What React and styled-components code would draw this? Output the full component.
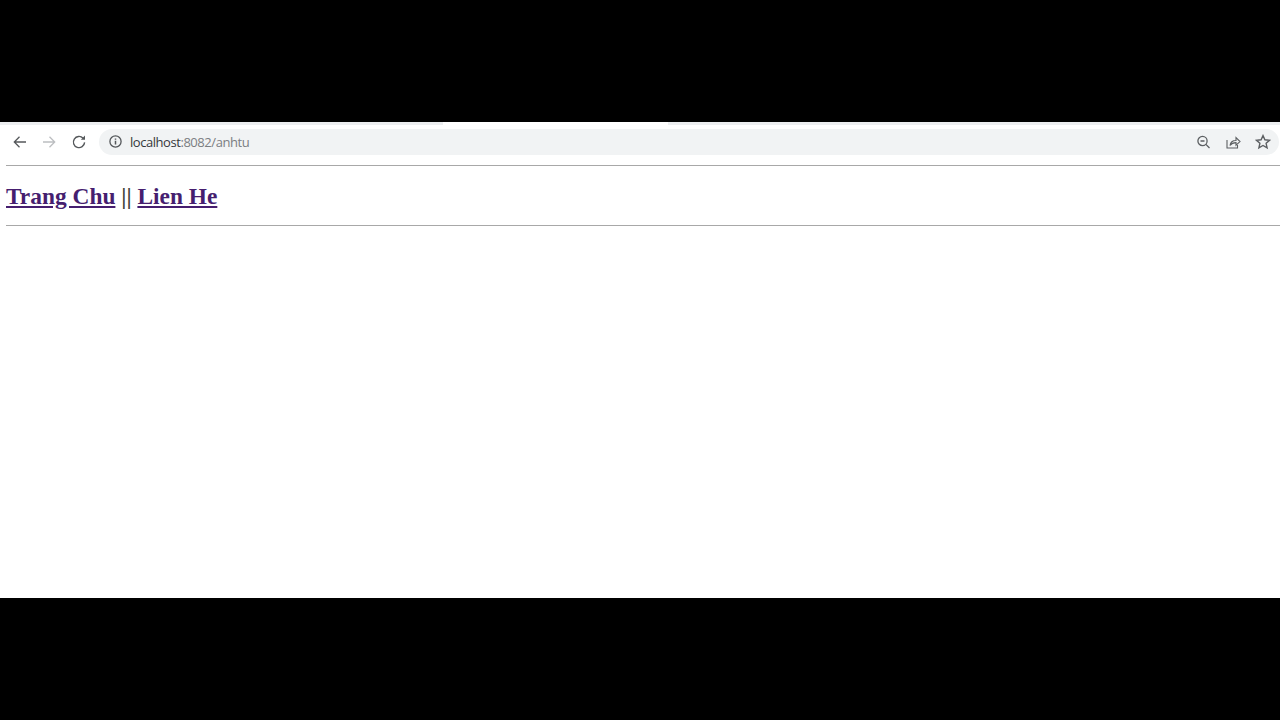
import React from "react";
import styled, { createGlobalStyle } from "styled-components";

const Global = createGlobalStyle`
  html, body { margin: 0; padding: 0; background: #000; }
`;

const Screen = styled.div`
  width: 1280px;
  height: 720px;
  overflow: hidden;
  display: flex;
  flex-direction: column;
  background: #000;
`;

const Letterbox = styled.div`
  height: ${(p) => p.$h}px;
  flex: none;
  background: #000;
`;

const BrowserWindow = styled.div`
  flex: 1;
  display: flex;
  flex-direction: column;
  background: #fff;
  min-height: 0;
`;

const TabStrip = styled.div`
  height: 3px;
  flex: none;
  background: #eceef0;
  display: flex;
  padding-left: 443px;
`;

const ActiveTab = styled.div`
  width: 225px;
  height: 3px;
  background: #fff;
`;

const Toolbar = styled.div`
  height: 33px;
  flex: none;
  display: flex;
  align-items: center;
  background: #fff;
  padding-left: 10px;
  box-sizing: border-box;
`;

const NavButton = styled.div`
  width: 20px;
  height: 20px;
  margin-right: ${(p) => p.$gap}px;
  display: flex;
  align-items: center;
  justify-content: center;
  color: ${(p) => p.$color};
`;

const Omnibox = styled.div`
  flex: 1;
  height: 26px;
  margin-right: 1px;
  border-radius: 13px;
  background: #f1f3f4;
  display: flex;
  align-items: center;
  padding-left: 10px;
  padding-right: 8px;
`;

const InfoSlot = styled.div`
  width: 13px;
  height: 13px;
  margin-right: 8px;
  color: #54575a;
  display: flex;
`;

const Url = styled.div`
  flex: 1;
  font: 13px/26px "Open Sans", "Noto Sans", sans-serif;
  letter-spacing: -0.45px;
  color: #7b7e82;
`;

const Host = styled.span`
  color: #35383b;
`;

const EndIcons = styled.div`
  display: flex;
  align-items: center;
  gap: 14px;
  color: #5c5f62;
`;

const EndIcon = styled.div`
  width: 16px;
  height: 16px;
  display: flex;
`;

const Page = styled.div`
  flex: 1;
  padding-left: 6px;
  background: #fff;
  min-height: 0;
`;

const Rule = styled.hr`
  margin: ${(p) => p.$m};
  border: none;
  height: 1px;
  background: #a8a8a8;
`;

const Heading = styled.h2`
  margin: 0;
  height: 59px;
  font: bold 23.4px/61px "Liberation Serif", serif;
  color: #44443a;
`;

const Link = styled.a`
  color: #461e6f;
  text-decoration: underline;
`;

export default function App() {
  return (
    <Screen>
      <Global />
      <Letterbox $h={122} />
      <BrowserWindow>
        <TabStrip>
          <ActiveTab />
        </TabStrip>
        <Toolbar>
          <NavButton $gap={9} $color="#55585b">
            <svg width="16" height="16" viewBox="0 0 16 16" fill="none" stroke="currentColor" strokeWidth="1.3">
              <path d="M14 8H2.5M7.5 2.8 2.3 8l5.2 5.2" />
            </svg>
          </NavButton>
          <NavButton $gap={10} $color="#bcbec1">
            <svg width="16" height="16" viewBox="0 0 16 16" fill="none" stroke="currentColor" strokeWidth="1.3">
              <path d="M2 8h11.5M8.5 2.8 13.7 8l-5.2 5.2" />
            </svg>
          </NavButton>
          <NavButton $gap={10} $color="#55585b">
            <svg width="16" height="16" viewBox="0 0 16 16" fill="none" stroke="currentColor" strokeWidth="1.4">
              <path d="M13.6 8.4a5.6 5.6 0 1 1-1.5-4.2" />
              <path d="M14 1.6v4.2H9.8" fill="currentColor" stroke="none" />
            </svg>
          </NavButton>
          <Omnibox>
            <InfoSlot>
              <svg width="13" height="13" viewBox="0 0 13 13" fill="none" stroke="currentColor" strokeWidth="1.3">
                <circle cx="6.5" cy="6.5" r="5.6" />
                <path d="M6.5 5.8v3.6M6.5 3.4v1.4" strokeWidth="1.5" />
              </svg>
            </InfoSlot>
            <Url>
              <Host>localhost</Host>:8082/anhtu
            </Url>
            <EndIcons>
              <EndIcon>
                <svg width="16" height="16" viewBox="0 0 16 16" fill="none" stroke="currentColor" strokeWidth="1.3">
                  <circle cx="7.5" cy="7" r="4.6" />
                  <path d="M10.9 10.4 14.5 14M5.5 7h4" />
                </svg>
              </EndIcon>
              <EndIcon>
                <svg width="16" height="16" viewBox="0 0 16 16" fill="none" stroke="currentColor" strokeWidth="1.1">
                  <path d="M2 6v8h10.5v-3" />
                  <path d="M5 11.5c.5-3.4 3-5 6-5V3.6l4 4-4 3.6V8.6c-2.6 0-4.6.8-6 2.9Z" />
                </svg>
              </EndIcon>
              <EndIcon>
                <svg width="16" height="16" viewBox="0 0 16 16" fill="none" stroke="currentColor" strokeWidth="1.4">
                  <path d="m8 1.6 1.9 4.2 4.6.5-3.4 3 1 4.5L8 11.5l-4.1 2.3 1-4.5-3.4-3 4.6-.5Z" />
                </svg>
              </EndIcon>
            </EndIcons>
          </Omnibox>
        </Toolbar>
        <Page>
          <Rule $m="7px 0 0" />
          <Heading>
            <Link>Trang Chu</Link> || <Link>Lien He</Link>
          </Heading>
          <Rule $m="0" />
        </Page>
      </BrowserWindow>
      <Letterbox $h={122} />
    </Screen>
  );
}
